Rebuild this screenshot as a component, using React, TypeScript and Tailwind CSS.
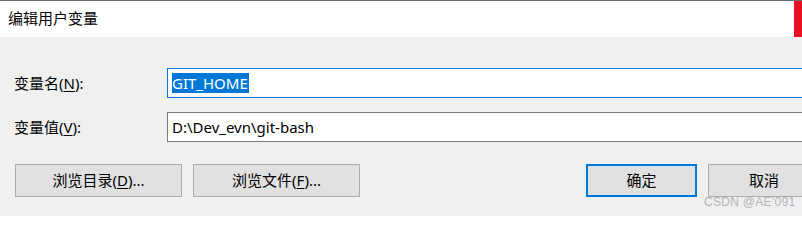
import React from "react";

const font = { fontFamily: '"Segoe UI", "Noto Sans", "Noto Sans CJK SC", sans-serif' };

function Btn({ children, primary, w }: { children: React.ReactNode; primary?: boolean; w: string }) {
  return (
    <div
      className={`${w} h-[33px] shrink-0 flex items-center justify-center bg-[#e1e1e1] text-[15px] text-black ${
        primary ? "border-2 border-[#0078d7]" : "border border-[#adadad]"
      }`}
    >
      {children}
    </div>
  );
}

export default function App() {
  return (
    <div
      className="relative w-[802px] h-[216px] overflow-hidden bg-[#f0f0f0] text-black leading-none"
      style={font}
    >
      <div className="h-[37px] bg-white border-t border-[#6e6e6e] flex items-stretch">
        <div className="flex items-center pl-[8px] text-[15px] pb-[1px]">编辑用户变量</div>
        <div className="ml-auto w-[8px] bg-[#e81123]" />
      </div>

      <div className="pt-[31px] flex flex-col">
        <div className="flex items-center h-[30px]">
          <div className="w-[167px] shrink-0 pl-[14px] text-[15px]">
            变量名(<span className="underline underline-offset-2">N</span>):
          </div>
          <div className="w-[700px] h-[30px] shrink-0 bg-white border border-[#0078d7] flex items-center pl-[4px]">
            <span className="bg-[#0078d7] text-white text-[15px] leading-[20px] h-[20px] pr-[1px]">GIT_HOME</span>
          </div>
        </div>

        <div className="flex items-center h-[30px] mt-[14px]">
          <div className="w-[167px] shrink-0 pl-[14px] text-[15px]">
            变量值(<span className="underline underline-offset-2">V</span>):
          </div>
          <div className="w-[700px] h-[30px] shrink-0 bg-white border border-[#7a7a7a] flex items-center pl-[4px]">
            <span className="text-[15px] leading-[20px]">D:\Dev_evn\git-bash</span>
          </div>
        </div>

        <div className="flex mt-[22px] pl-[15px]">
          <Btn w="w-[167px]">
            浏览目录(<span className="underline underline-offset-2">D</span>)...
          </Btn>
          <div className="w-[11px] shrink-0" />
          <Btn w="w-[167px]">
            浏览文件(<span className="underline underline-offset-2">F</span>)...
          </Btn>
          <div className="w-[226px] shrink-0" />
          <Btn w="w-[111px]" primary>
            确定
          </Btn>
          <div className="w-[11px] shrink-0" />
          <Btn w="w-[112px]">取消</Btn>
        </div>
      </div>

      <div
        className="absolute left-[704px] top-[196px] text-[12px] text-[#b4b4b4] tracking-[0.3px]"
        style={{ fontFamily: '"Liberation Sans", "Noto Sans", sans-serif' }}
      >
        CSDN @AE'091
      </div>
    </div>
  );
}
